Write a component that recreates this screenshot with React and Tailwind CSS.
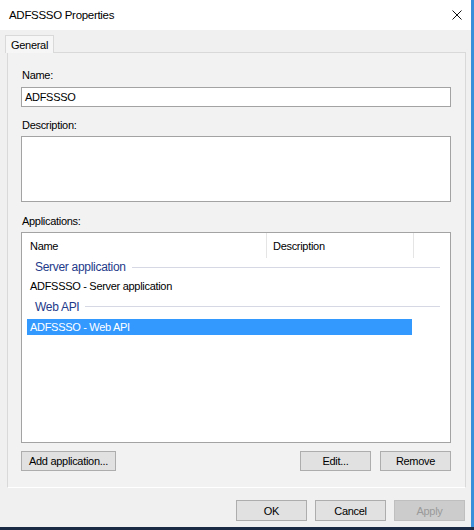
import React from 'react';

function WinButton({ children, className = '', disabled = false }) {
  return (
    <div
      className={
        'flex items-center justify-center border ' +
        (disabled
          ? 'bg-[#cccccc] border-[#bfbfbf] text-[#9a9a9a] '
          : 'bg-[#e1e1e1] border-[#adadad] text-black ') +
        className
      }
    >
      {children}
    </div>
  );
}

function GroupRow({ label, className = '' }) {
  return (
    <div className={'flex items-center pl-[13px] pr-[10px] text-[#1e3a8a] ' + className}>
      <span className="text-[12px]">{label}</span>
      <div className="flex-1 h-px bg-[#d6d9e4] ml-[6px]" />
    </div>
  );
}

export default function App() {
  return (
    <div className="w-[474px] h-[530px] flex flex-col overflow-hidden font-['Liberation_Sans',Arial,sans-serif] text-[11px] tracking-[-0.3px] text-black leading-[16px]">
      <div className="flex flex-1 min-h-0">
        <div className="flex-1 flex flex-col bg-[#f0f0f0]">
          {/* title bar */}
          <div className="h-[30px] bg-white flex items-center justify-between pl-[9px] pr-[9px] shrink-0">
            <span className="text-[11.5px] tracking-[-0.3px]">ADFSSSO Properties</span>
            <svg width="10" height="10" viewBox="0 0 10 10">
              <path d="M0.5 0.5L9.5 9.5M9.5 0.5L0.5 9.5" stroke="#111" strokeWidth="1" />
            </svg>
          </div>

          {/* tab strip */}
          <div className="pt-[5px] pl-[5px] shrink-0">
            <div className="relative z-10 w-[49px] h-[18px] border border-b-0 border-[#d9d9d9] bg-[#f6f6f6] pl-[5px] flex items-center">
              General
            </div>
          </div>

          {/* tab page */}
          <div className="-mt-px ml-[7px] w-[459px] h-[436px] border border-[#d9d9d9] border-b-white bg-[#f2f2f2] flex flex-col pl-[13px] pr-[14px] shrink-0">
            <div className="mt-[14px] pl-px">Name:</div>
            <div className="mt-[4px] h-[20px] border border-[#a3a3a3] bg-white pl-[3px] flex items-center">
              ADFSSSO
            </div>

            <div className="mt-[10px] pl-px">Description:</div>
            <div className="mt-[3px] h-[66px] border border-[#a3a3a3] bg-white" />

            <div className="mt-[11px] pl-px">Applications:</div>
            <div className="mt-[3px] h-[211px] border border-[#a3a3a3] bg-white flex flex-col">
              <div className="h-[25px] flex">
                <div className="w-[245px] border-r border-[#e5e5e5] pl-[8px] flex items-center">Name</div>
                <div className="w-[147px] border-r border-[#e5e5e5] pl-[6px] flex items-center">Description</div>
              </div>
              <GroupRow label="Server application" className="h-[18px]" />
              <div className="h-[20px] pl-[8px] flex items-center">ADFSSSO - Server application</div>
              <GroupRow label="Web API" className="h-[21px]" />
              <div className="mt-[2px] ml-[5px] w-[385px] h-[16px] bg-[#3399ff] text-white pl-[3px] flex items-center">
                ADFSSSO - Web API
              </div>
            </div>

            <div className="mt-[8px] flex gap-[9px]">
              <WinButton className="w-[95px] h-[20px]">Add application...</WinButton>
              <div className="flex-1" />
              <WinButton className="w-[71px] h-[20px]">Edit...</WinButton>
              <WinButton className="w-[71px] h-[20px]">Remove</WinButton>
            </div>
          </div>

          {/* dialog buttons */}
          <div className="mt-[12px] flex justify-end gap-[8px] pr-[6px] shrink-0">
            <WinButton className="w-[71px] h-[21px]">OK</WinButton>
            <WinButton className="w-[71px] h-[21px]">Cancel</WinButton>
            <WinButton className="w-[71px] h-[21px]" disabled>Apply</WinButton>
          </div>
        </div>
        <div className="w-[3px] bg-[#3a8fdb]" />
      </div>
      <div className="h-[3px] bg-[#1b2a44] shrink-0" />
    </div>
  );
}
